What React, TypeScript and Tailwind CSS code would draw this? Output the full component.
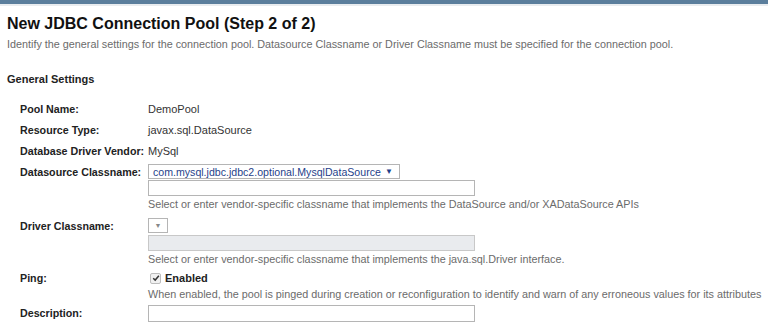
import React from "react";

const font = { fontFamily: '"Liberation Sans", Arial, sans-serif' };

function Label({ children }: { children: React.ReactNode }) {
  return (
    <div className="w-[128px] shrink-0 whitespace-nowrap text-[10.7px] font-bold text-[#222]">{children}</div>
  );
}

function Help({ children }: { children: React.ReactNode }) {
  return (
    <div className="whitespace-nowrap text-[10.8px] leading-[14px] text-[#6b6b6b] mt-[1px]">{children}</div>
  );
}

export default function App() {
  return (
    <div className="w-[768px] h-[325px] overflow-hidden bg-white" style={font}>
      <div className="h-[4px] bg-[#5b7e9c]" />
      <div className="h-[2px] bg-[#e9ecef]" />
      <div className="px-[7px]">
        <h1 className="mt-[6px] text-[16px] leading-[24px] font-bold text-[#111]">
          New JDBC Connection Pool (Step 2 of 2)
        </h1>
        <p className="text-[10.8px] leading-[16px] text-[#6b6b6b]">
          Identify the general settings for the connection pool. Datasource Classname or Driver Classname must be specified for the connection pool.
        </p>
        <h2 className="mt-[19px] text-[11px] leading-[16px] font-bold text-[#222]">General Settings</h2>
      </div>

      <div className="pl-[20px] mt-[12px] text-[11px] leading-[21px]">
        <div className="flex h-[21px] items-center">
          <Label>Pool Name:</Label>
          <div className="text-[#333]">DemoPool</div>
        </div>
        <div className="flex h-[21px] items-center">
          <Label>Resource Type:</Label>
          <div className="text-[#333]">javax.sql.DataSource</div>
        </div>
        <div className="flex h-[21px] items-center">
          <Label>Database Driver Vendor:</Label>
          <div className="text-[#333]">MySql</div>
        </div>

        <div className="flex items-start mt-[2px]">
          <div className="shrink-0 leading-[16px]">
            <Label>Datasource Classname:</Label>
          </div>
          <div className="flex flex-col items-start leading-[14px]">
            <div className="flex h-[15px] items-center border border-[#b5b5b5] bg-white pl-[4px] pr-[6px] text-[10.6px] text-[#1f3f8a]">
              <span className="whitespace-nowrap">com.mysql.jdbc.jdbc2.optional.MysqlDataSource</span>
              <span className="ml-[4px] text-[8px] text-[#1f3f8a]">▼</span>
            </div>
            <div className="mt-[1px] h-[16px] w-[327px] border border-[#b5b5b5] bg-white" />
            <Help>Select or enter vendor-specific classname that implements the DataSource and/or XADataSource APIs</Help>
          </div>
        </div>

        <div className="flex items-start mt-[7px]">
          <div className="shrink-0 leading-[16px]">
            <Label>Driver Classname:</Label>
          </div>
          <div className="flex flex-col leading-[14px]">
            <div className="flex h-[15px] w-[20px] items-center justify-center border border-[#b5b5b5] bg-white">
              <span className="text-[7px] text-[#888]">▼</span>
            </div>
            <div className="mt-[2px] h-[16px] w-[327px] border border-[#c8c8c8] bg-[#e9ebee]" />
            <Help>Select or enter vendor-specific classname that implements the java.sql.Driver interface.</Help>
          </div>
        </div>

        <div className="flex items-start mt-[4px]">
          <div className="shrink-0 leading-[16px]">
            <Label>Ping:</Label>
          </div>
          <div className="flex flex-col">
            <label className="flex items-center h-[16px] gap-[4px]">
              <span className="ml-[2px] flex h-[11px] w-[11px] items-center justify-center rounded-[2px] border border-[#bdbdbd] bg-[#f1f1f1]">
                <svg viewBox="0 0 10 10" className="h-[8px] w-[8px]">
                  <path d="M1.5 5.2 L4 7.6 L8.6 2.2" fill="none" stroke="#333" strokeWidth="1.8" />
                </svg>
              </span>
              <span className="font-bold text-[#222]">Enabled</span>
            </label>
            <Help>When enabled, the pool is pinged during creation or reconfiguration to identify and warn of any erroneous values for its attributes</Help>
          </div>
        </div>

        <div className="flex items-center mt-[2px]">
          <Label>Description:</Label>
          <div className="h-[17px] w-[327px] border border-[#b5b5b5] bg-white" />
        </div>
      </div>
    </div>
  );
}
